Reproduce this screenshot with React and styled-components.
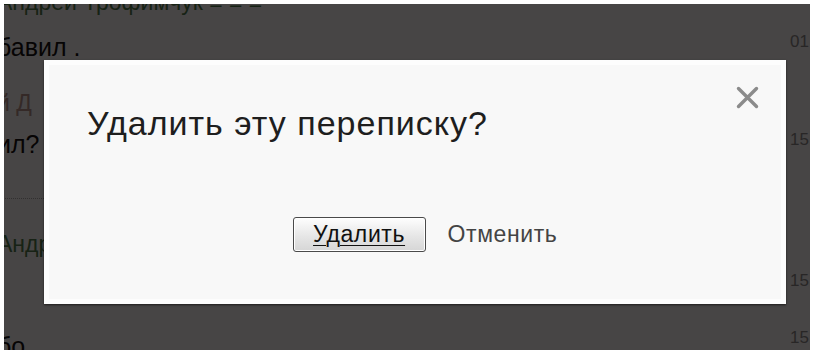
import React from 'react'
import styled, { createGlobalStyle } from 'styled-components'

const GlobalStyle = createGlobalStyle`
  html, body {
    margin: 0;
    padding: 0;
    background: #ffffff;
  }
  body {
    font-family: "Liberation Sans", Arial, sans-serif;
  }
`

const thread = [
  { h: 40, kind: 'name', text: 'Андрей Трофимчук ≡ ≡ ≡', color: '#4f7f4f' },
  { h: 46, kind: 'msg', text: 'бавил .', time: '01', lift: 10 },
  { h: 55, kind: 'name', text: 'й Д', color: '#b89890' },
  { h: 42, kind: 'msg', text: 'ил?', time: '15', lift: 9 },
  { h: 42, kind: 'sep' },
  { h: 57, kind: 'name', text: 'Андрей', color: '#4f7f4f' },
  { h: 33, kind: 'msg', text: '', time: '15', lift: 0 },
  { h: 70, kind: 'msg', text: 'бо', time: '15', lift: 13 },
]

const App = () => {
  return (
    <>
      <GlobalStyle />
      <Frame>
        <Thread>
          {thread.map((line, i) => (
            <Line key={i} $h={line.h} $dotted={line.kind === 'sep'}>
              {line.kind === 'name' && <Author $color={line.color}>{line.text}</Author>}
              {line.kind === 'msg' && <Message>{line.text}</Message>}
              {line.time && <Time $lift={line.lift}>{line.time}</Time>}
            </Line>
          ))}
        </Thread>

        <Overlay />

        <Dialog>
          <Close aria-label="Закрыть">
            <svg width="23" height="23" viewBox="0 0 23 23">
              <path d="M2.5 2.5 L20.5 20.5 M20.5 2.5 L2.5 20.5" stroke="#8b8b8b" strokeWidth="3.4" strokeLinecap="round" />
            </svg>
          </Close>
          <Title>Удалить эту переписку?</Title>
          <Footer>
            <DeleteButton>Удалить</DeleteButton>
            <CancelLink>Отменить</CancelLink>
          </Footer>
        </Dialog>
      </Frame>
    </>
  )
}

export default App

const Frame = styled.div`
  position: relative;
  margin: 4px 4px 0;
  height: 346px;
  overflow: hidden;
  background: #ffffff;
`

const Thread = styled.div`
  margin: -30px -14px 0 -7px;
  display: flex;
  flex-direction: column;
`

const Line = styled.div`
  height: ${p => p.$h}px;
  box-sizing: border-box;
  display: flex;
  justify-content: space-between;
  align-items: flex-end;
  border-bottom: ${p => (p.$dotted ? '1px dotted #b0b0b0' : 'none')};
  margin-right: ${p => (p.$dotted ? '760px' : '0')};
`

const Author = styled.span`
  font-size: 23px;
  line-height: 1;
  color: ${p => p.$color};
  white-space: nowrap;
`

const Message = styled.span`
  font-size: 25px;
  line-height: 1;
  color: #111;
  white-space: nowrap;
`

const Time = styled.span`
  width: 34px;
  margin-left: auto;
  margin-bottom: ${p => p.$lift}px;
  font-size: 17px;
  line-height: 1;
  color: #8c8c8c;
`

const Overlay = styled.div`
  position: absolute;
  inset: 0;
  background: rgba(3, 0, 0, 0.73);
`

const Dialog = styled.div`
  position: absolute;
  left: 40px;
  top: 56px;
  width: 742px;
  height: 244px;
  box-sizing: border-box;
  padding: 45px 43px 0;
  background: #f8f8f8;
  box-shadow: inset 0 0 0 5px #fdfdfd, 0 1px 2px rgba(0, 0, 0, 0.6);
`

const Close = styled.button`
  position: absolute;
  top: 26px;
  right: 27px;
  width: 23px;
  height: 23px;
  padding: 0;
  border: none;
  background: none;
  display: flex;
  cursor: pointer;
`

const Title = styled.div`
  font-size: 34px;
  line-height: 37px;
  letter-spacing: 1px;
  color: #1e1e1e;
`

const Footer = styled.div`
  margin-top: 75px;
  padding-left: 20px;
  display: flex;
  justify-content: center;
  align-items: center;
  gap: 22px;
`

const DeleteButton = styled.button`
  width: 133px;
  height: 35px;
  padding: 0;
  border: 1px solid #4a4a4a;
  border-radius: 3px;
  background: linear-gradient(#fefefe, #e6e6e6 55%, #d6d6d6);
  box-shadow: inset 0 0 0 1px #ffffff;
  font-family: "Liberation Sans", Arial, sans-serif;
  font-size: 23px;
  letter-spacing: 0.6px;
  color: #111;
  text-decoration: underline;
  text-underline-offset: 3px;
  text-decoration-thickness: 1px;
  cursor: pointer;
`

const CancelLink = styled.span`
  font-size: 23px;
  color: #444;
  letter-spacing: 0.6px;
  cursor: pointer;
`
